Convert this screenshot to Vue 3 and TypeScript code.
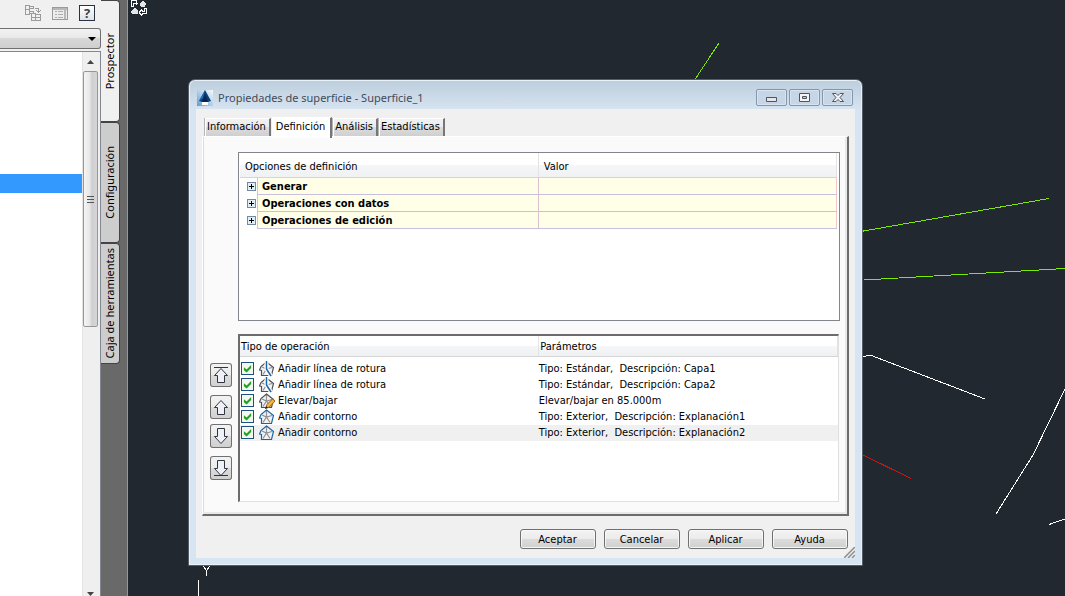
<script setup lang="ts">
import { ref } from 'vue'

type IconKind = 'break' | 'edit' | 'outline'
interface Operation {
  name: string
  params: string
  icon: IconKind
  enabled: boolean
}

const paletteTabs = ['Prospector', 'Configuración', 'Caja de herramientas']
const activePalette = ref(0)
const tabs = ['Información', 'Definición', 'Análisis', 'Estadísticas']
const activeTab = ref(1)
const options = ['Generar', 'Operaciones con datos', 'Operaciones de edición']
const selected = ref(4)
const operations = ref<Operation[]>([
  { name: 'Añadir línea de rotura', params: 'Tipo: Estándar,  Descripción: Capa1', icon: 'break', enabled: true },
  { name: 'Añadir línea de rotura', params: 'Tipo: Estándar,  Descripción: Capa2', icon: 'break', enabled: true },
  { name: 'Elevar/bajar', params: 'Elevar/bajar en 85.000m', icon: 'edit', enabled: true },
  { name: 'Añadir contorno', params: 'Tipo: Exterior,  Descripción: Explanación1', icon: 'outline', enabled: true },
  { name: 'Añadir contorno', params: 'Tipo: Exterior,  Descripción: Explanación2', icon: 'outline', enabled: true },
])
const arrowUp = 'M11 5.5 L17.5 12.5 H14.5 V19.5 H7.5 V12.5 H4.5 Z'
const arrowDown = 'M11 19.5 L17.5 12.5 H14.5 V4.5 H7.5 V12.5 H4.5 Z'
const moveGroups = [
  [
    { label: 'Mover al principio', path: arrowUp, bar: 'M4 4.5 H18' },
    { label: 'Subir', path: arrowUp, bar: '' },
  ],
  [
    { label: 'Bajar', path: arrowDown, bar: '' },
    { label: 'Mover al final', path: arrowDown, bar: 'M4 19.5 H18' },
  ],
]
const actions = ['Aceptar', 'Cancelar', 'Aplicar', 'Ayuda']
</script>

<template>
  <div class="desktop">
    <aside class="palette">
      <div class="toolbar">
        <button type="button" aria-label="Vista">
          <svg width="17" height="17" viewBox="0 0 17 17" fill="none" stroke="#9b9b9b" shape-rendering="crispEdges">
            <path d="M.5 .5H4.5V9.500H.5ZM.5 4.500H4.5M4.5 1.5H8.5V3.5H4.5ZM4.5 6.5H8.5V8.5H4.5ZM6.5 8.5H10.5V15.5H6.5ZM10.5 9.5H15.5V15.5H10.5ZM7 12.5H15" />
            <path d="M10 3.5H13.5V7M11.5 5.5L13.5 7.5L15.5 5.5" />
          </svg>
        </button>
        <button type="button" aria-label="Panorámica">
          <svg width="17" height="15" viewBox="0 0 17 15" fill="none" shape-rendering="crispEdges">
            <path d="M.5 1.5H15.5V13.5H.5Z" fill="#ececec" stroke="#9b9b9b" />
            <path d="M1 2.500H15M12.500 3V13" stroke="#b8b8b8" stroke-width="2" />
            <path d="M3 5.5H5M6 5.500H11M3 8.5H5M6 8.500H11M3 11.5H5M6 11.500H11" stroke="#adadad" />
          </svg>
        </button>
        <button type="button" class="help" aria-label="Ayuda de la paleta">?</button>
      </div>
      <div class="combo">
        <select aria-label="Vista activa"><option></option></select>
        <svg width="8" height="4" viewBox="0 0 8 4"><path d="M0 0H8L4 4Z" fill="#000" /></svg>
      </div>
      <div class="tree">
        <div class="items"><div class="item-selected"></div></div>
        <div class="scroll">
          <svg width="7" height="4" viewBox="0 0 7 4"><path d="M0 4H7L3.500 0Z" fill="#444" /></svg>
          <div class="thumb"><i></i><i></i><i></i></div>
          <svg class="down" width="7" height="4" viewBox="0 0 7 4"><path d="M0 0H7L3.500 4Z" fill="#444" /></svg>
        </div>
      </div>
    </aside>

    <nav class="side-tabs" aria-label="Espacio de herramientas">
      <button
        v-for="(t, i) in paletteTabs"
        :key="t"
        type="button"
        :class="{ active: activePalette === i }"
        @click="activePalette = i"
      ><span>{{ t }}</span></button>
    </nav>

    <main class="canvas">
      <svg class="drawing" width="937" height="596" viewBox="128 0 937 596" fill="none" shape-rendering="crispEdges">
        <g stroke="#7ee805">
          <path d="M719 43L690 87M855 232.500L1049 198.500M855 280.500L1065 268.500" />
        </g>
        <g stroke="#fff">
          <path d="M862 357L870 355L985 399M1065 389L1033 455L996 514M1049 524.500L1065 519M203 566L206.500 570.500L210 566M206.500 570V576M198.500 580V596" />
        </g>
        <path d="M862 454.500L911 478.500" stroke="#d01414" />
        <g stroke="#fff">
          <path d="M131.500 7V0.500H136.500V4.500M134 3.500H138M133.500 7V3M131 6.500H134" />
          <path d="M144 8.500H146.500V13.500H142V15M142.500 10V12M139 12.500L142 9.500M139 12.500L142 15.500M142 11.500H144.500V9" />
        </g>
        <path d="M140 4L143 0L146 4L145 7H141ZM131 11L135 8L138 11V14H132Z" fill="#e4e6e8" />
      </svg>

      <section class="dialog" role="dialog" aria-labelledby="dialog-title">
        <header class="titlebar">
          <svg width="16" height="16" viewBox="0 0 16 16">
            <defs>
              <linearGradient id="app-bg" x1="1" y1="0" x2="0" y2="1">
                <stop offset="0" stop-color="#f5f9fc" /><stop offset=".5" stop-color="#b4cfe6" /><stop offset="1" stop-color="#5f9bcb" />
              </linearGradient>
            </defs>
            <path d="M0 0H16V16H0Z" fill="url(#app-bg)" />
            <path d="M8 0L14 11L11 12H5L2 11Z" fill="#0a3d7c" />
            <path d="M8 0L6 8L2 11Z" fill="#1f6fb2" />
            <path d="M8 4L11 12H5Z" fill="#062553" />
            <path d="M5 12H11V15H5Z" fill="#fff" />
          </svg>
          <h1 id="dialog-title">Propiedades de superficie - Superficie_1</h1>
          <div class="window-buttons">
            <button type="button" aria-label="Minimizar">
              <svg width="12" height="10" viewBox="0 0 12 10"><path d="M.5 4.500H10.500V8.500H.5Z" fill="#e6e6e8" stroke="#50545c" /></svg>
            </button>
            <button type="button" aria-label="Maximizar">
              <svg width="12" height="10" viewBox="0 0 12 10"><path d="M.5 .5H10.500V8.500H.5Z" fill="#f4f4f6" stroke="#50545c" /><path d="M3.500 3.500H7.500V5.500H3.500Z" fill="#b8cbe0" stroke="#50545c" /></svg>
            </button>
            <button type="button" aria-label="Cerrar">
              <svg width="12" height="10" viewBox="0 0 12 10"><path d="M.5 .5H4L6 2.500L8 .5H11.500L8 4.500L11.500 8.500H8L6 6.500L4 8.500H.5L4 4.500Z" fill="#f4f4f6" stroke="#50545c" /></svg>
            </button>
          </div>
        </header>

        <div class="body">
          <div class="tabs" role="tablist">
            <button
              v-for="(t, i) in tabs"
              :key="t"
              type="button"
              role="tab"
              :aria-selected="activeTab === i"
              :class="{ active: activeTab === i }"
              @click="activeTab = i"
            >{{ t }}</button>
          </div>

          <div class="page" role="tabpanel">
            <div class="frame options">
              <table>
                <colgroup><col class="name" /><col /></colgroup>
                <thead><tr><th>Opciones de definición</th><th>Valor</th></tr></thead>
                <tbody>
                  <tr v-for="o in options" :key="o">
                    <td>
                      <div class="option">
                        <button type="button" :aria-label="'Expandir ' + o">
                          <svg width="9" height="9" viewBox="0 0 9 9" shape-rendering="crispEdges"><path d="M.5 .5H8.500V8.500H.5Z" fill="#e0eef6" stroke="#6f8aa2" /><path d="M2 4.500H7M4.500 2V7" stroke="#000" /></svg>
                        </button>
                        <b>{{ o }}</b>
                      </div>
                    </td>
                    <td></td>
                  </tr>
                </tbody>
              </table>
            </div>

            <div class="order">
              <div v-for="(group, g) in moveGroups" :key="g" class="order-group">
                <button v-for="m in group" :key="m.label" type="button" :aria-label="m.label">
                  <svg width="22" height="24" viewBox="0 0 22 24"><path :d="m.path" fill="#eef2f8" stroke="#30363f" /><path v-if="m.bar" :d="m.bar" stroke="#30363f" /></svg>
                </button>
              </div>
            </div>

            <div class="frame operations">
              <table>
                <colgroup><col class="name" /><col /></colgroup>
                <thead><tr><th>Tipo de operación</th><th>Parámetros</th></tr></thead>
                <tbody>
                  <tr v-for="(op, i) in operations" :key="i" :class="{ selected: selected === i }" @click="selected = i">
                    <td>
                      <label>
                        <input v-model="op.enabled" type="checkbox" />
                        <svg width="16" height="16" viewBox="0 0 16 16" fill="none">
                          <path d="M7.500 1L14.500 6.500L12.500 14.500H2.500V9.500L.5 9L2 5.500Z" fill="#f1f2f4" :stroke="op.icon === 'outline' ? '#1d66a6' : '#4b5158'" stroke-width="1.200" />
                          <path d="M7.500 2V8M3 6L7.500 8L13 6.500M7.500 8L4 13.500M7.500 8L11 13.500" stroke="#8e9297" stroke-width="1.200" />
                          <g v-if="op.icon === 'break'">
                            <path d="M7.500 0V8L12 15" stroke="#fff" stroke-width="4" />
                            <path d="M7.500 0V8L12 15" stroke="#1d66a6" stroke-width="1.500" />
                          </g>
                          <g v-if="op.icon === 'edit'">
                            <path d="M7 15L8 11.500L13.500 6L16 8L10.500 14Z" fill="#f6b63c" stroke="#a45a18" />
                            <path d="M6 16L7 13L9 15Z" fill="#222" />
                          </g>
                        </svg>
                        <span>{{ op.name }}</span>
                      </label>
                    </td>
                    <td>{{ op.params }}</td>
                  </tr>
                </tbody>
              </table>
            </div>
          </div>

          <footer>
            <button v-for="a in actions" :key="a" type="button">{{ a }}</button>
          </footer>
          <svg class="grip" width="11" height="11" viewBox="0 0 11 11"><path d="M0 11L11 0M4 11L11 4M8 11L11 8" stroke="#8c8c8c" stroke-width="1.500" /></svg>
        </div>
      </section>
    </main>
  </div>
</template>

<style>
body {
  margin: 0;
  background: #212830;
}
</style>

<style scoped>
* {
  box-sizing: border-box;
}
.desktop {
  display: flex;
  height: 100vh;
  overflow: hidden;
  font: 11px/16px "Noto Sans", sans-serif;
  color: #000;
}
button {
  padding: 0;
  font: inherit;
  color: inherit;
}
svg {
  display: block;
  flex: none;
}
.palette {
  display: flex;
  flex-direction: column;
  flex: none;
  width: 101px;
  background: #f0f0f0;
}
.toolbar {
  display: flex;
  justify-content: flex-end;
  align-items: center;
  gap: 10px;
  height: 28px;
  padding: 0 6px 2px 0;
}
.toolbar button {
  border: 0;
  background: none;
}
.toolbar .help {
  width: 16px;
  height: 16px;
  border: 1px solid #2b3340;
  background: linear-gradient(#fff, #dfe3e8);
  font: bold 13px/14px "Open Sans", sans-serif;
  color: #39414c;
}
.combo {
  display: flex;
  align-items: center;
  height: 21px;
  padding-right: 4px;
  border: 1px solid #707070;
  border-left: 0;
  border-radius: 0 3px 3px 0;
  background: linear-gradient(#f2f2f2, #e8e8e8 50%, #d8d8d8 50%, #cfcfcf);
}
.combo select {
  flex: 1;
  min-width: 0;
  height: 100%;
  border: 0;
  background: none;
  appearance: none;
}
.tree {
  display: flex;
  flex: 1;
  margin-top: 2px;
  border: 1px solid #828790;
  border-width: 1px 1px 0 0;
  background: #fff;
}
.items {
  flex: 1;
  padding-top: 122px;
}
.item-selected {
  height: 19px;
  background: #3399ff;
}
.scroll {
  display: flex;
  flex-direction: column;
  align-items: center;
  width: 18px;
  padding: 8px 2px 0 0;
  border-left: 1px solid #e3e3e3;
  background: #efefef;
}
.thumb {
  display: flex;
  flex-direction: column;
  align-items: center;
  justify-content: center;
  gap: 2px;
  width: 15px;
  height: 256px;
  margin-top: 7px;
  border: 1px solid #979797;
  border-radius: 2px;
  background: linear-gradient(90deg, #f5f5f5, #e6e6e6 45%, #cfcfd1 60%, #d6d6d8);
}
.thumb i {
  width: 7px;
  height: 1px;
  background: #555;
}
.scroll .down {
  margin: auto 0 0;
}
.side-tabs {
  display: flex;
  flex-direction: column;
  flex: none;
  width: 27px;
  padding-right: 7px;
  border-right: 1px solid #969696;
  background: #696969;
}
.side-tabs button {
  display: flex;
  align-items: center;
  justify-content: center;
  width: 19px;
  height: 121px;
  border: 1px solid #444;
  border-left: 0;
  border-radius: 0 4px 4px 0;
  background: #cdcdcd;
  white-space: nowrap;
}
.side-tabs .active {
  height: 122px;
  background: #f0f0f0;
}
.side-tabs span {
  writing-mode: vertical-rl;
  transform: rotate(180deg);
}
.canvas {
  position: relative;
  flex: 1;
  background: #212830;
}
.drawing {
  position: absolute;
  left: 0;
  top: 0;
}
.dialog {
  position: absolute;
  left: 60px;
  right: 202px;
  top: 79px;
  padding: 0 7px 7px;
  border: 1px solid #555d66;
  border-radius: 7px 7px 0 0;
  background: linear-gradient(#bccddd, #d7e4f1 30px);
  box-shadow: inset 0 0 0 1px #e8f1f8;
}
.titlebar {
  display: flex;
  align-items: center;
  height: 29px;
  padding: 6px 1px 0;
}
h1 {
  flex: 1;
  margin: 0 0 0 5px;
  font: inherit;
  color: #3f4b58;
}
.window-buttons {
  display: flex;
  gap: 2px;
  padding-right: 1px;
}
.window-buttons button {
  display: grid;
  place-items: center;
  width: 31px;
  height: 17px;
  border: 1px solid #8496ac;
  border-radius: 2px;
  background: #c6d6e7;
  box-shadow: inset 0 0 0 1px #d8e4f0;
}
.body {
  position: relative;
  padding: 8px 6px 9px;
  background: #f0f0f0;
  font-family: "DejaVu Sans Condensed", "DejaVu Sans", sans-serif;
}
.tabs {
  display: flex;
  align-items: flex-end;
  gap: 1px;
  height: 19px;
  padding-left: 3px;
}
.tabs button {
  height: 18px;
  padding: 0 3px 2px 1px;
  border: 1px solid #fff;
  border-right: 2px solid #777;
  border-bottom: 0;
  background: linear-gradient(#f2f2f2, #ebebeb 50%, #dcdcdc 50%, #cfcfcf);
  box-shadow: -1px 0 #b5b5b5;
}
.tabs .active {
  position: relative;
  height: 21px;
  margin-bottom: -2px;
  padding: 0 5px 2px 3px;
  background: #fff;
  box-shadow: none;
}
.page {
  display: grid;
  grid-template-columns: 28px 1fr;
  gap: 13px 0;
  padding: 15px 7px 12px 7px;
  border: 1px solid #fff;
  border-right: 2px solid #6c6c6c;
  border-bottom: 2px solid #6c6c6c;
  background: #fafafa;
  box-shadow: inset -2px -2px #e8e8e8, inset 1px 0 #ddd;
}
.frame {
  grid-column: 2;
  border: 1px solid #82858a;
  background: #fff;
}
table {
  width: 100%;
  border-collapse: collapse;
  table-layout: fixed;
}
.name {
  width: 50%;
}
th,
td {
  padding: 0;
  text-align: left;
  font-weight: normal;
  white-space: pre;
}
th {
  border-bottom: 1px solid #d5d5d5;
  background: linear-gradient(#fff 50%, #f5f6f8 50%, #eff1f3);
}
th + th {
  border-left: 1px solid #e2e3e6;
  border-right: 1px solid #e2e3e6;
}
.options {
  height: 169px;
  padding: 0 2px 0 1px;
}
.options th {
  height: 24px;
  padding: 4px 5px 0;
}
.options td {
  height: 17px;
  border-bottom: 1px solid #c8c0dc;
  background: #ffffe8;
}
.options td:first-child {
  border-bottom: 0;
  background: none;
}
.options td + td {
  border-left: 1px solid #dcc0d0;
  border-right: 1px solid #f0c8c8;
}
.option {
  display: flex;
  align-items: center;
  padding-left: 7px;
}
.option button {
  border: 0;
  background: none;
}
.option b {
  flex: 1;
  height: 17px;
  margin-left: 1px;
  padding: 1px 0 0 4px;
  border-left: 1px solid #dcc0d0;
  border-bottom: 1px solid #c8c0dc;
  background: #ffffe8;
}
.order {
  display: flex;
  flex-direction: column;
  gap: 5px;
  padding-top: 29px;
}
.order-group {
  display: flex;
  flex-direction: column;
  gap: 8px;
}
.order button {
  width: 22px;
  height: 24px;
  border: 0;
  border-radius: 3px;
  background: linear-gradient(#f3f3f3, #ebebeb 50%, #dcdcdc 50%, #d0d0d0);
  box-shadow: inset 0 0 0 1px #707070;
}
.operations {
  height: 168px;
  margin-right: 1px;
  border: 1px solid #e0e0e0;
  border-top: 2px solid #6c6c6c;
  border-left: 2px solid #6c6c6c;
}
.operations th {
  height: 20px;
  padding: 3px 1px 0;
}
.operations tbody::before {
  content: "";
  display: block;
  height: 4px;
}
.operations td {
  height: 16px;
}
.operations label {
  display: flex;
  align-items: center;
  height: 16px;
  padding-left: 1px;
}
.operations label svg {
  margin: 0 3px 0 5px;
}
.operations input {
  display: grid;
  place-items: center;
  width: 13px;
  height: 13px;
  margin: 0;
  border: 1px solid #1c5180;
  background: #f3f6f3;
  appearance: none;
}
.operations input:checked::before {
  content: "";
  width: 9px;
  height: 9px;
  background: #21a121;
  clip-path: polygon(10% 35%, 40% 60%, 90% 10%, 90% 45%, 40% 95%, 10% 70%);
}
.selected {
  background: #f0f0f0;
}
footer {
  display: flex;
  justify-content: flex-end;
  gap: 8px;
  padding: 13px 1px 0 0;
}
footer button {
  width: 76px;
  height: 20px;
  padding: 2px 1px 0 0;
  border: 1px solid #707070;
  border-radius: 3px;
  background: linear-gradient(#f3f3f3, #ebebeb 50%, #dcdcdc 50%, #d0d0d0);
  box-shadow: inset 0 0 0 1px #f6f6f6;
}
.grip {
  position: absolute;
  right: 0;
  bottom: 0;
}
</style>
